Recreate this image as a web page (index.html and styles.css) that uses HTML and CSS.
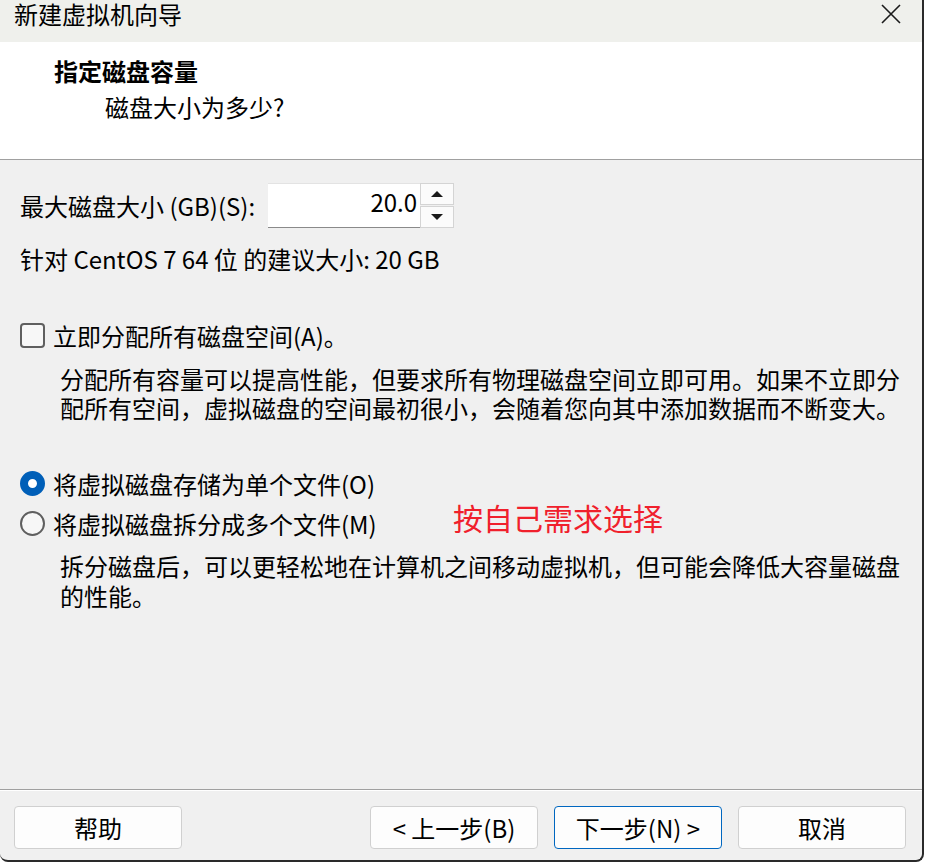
FILE: index.html
```html
<!DOCTYPE html>
<html lang="zh-CN">
<head>
  <meta charset="UTF-8">
  <link rel="stylesheet" href="styles.css">
  <title>新建虚拟机向导</title>
</head>
<body>
  <div class="window">
    <div class="titlebar">
      <span class="title">新建虚拟机向导</span>
      <svg class="close" width="22" height="22" viewBox="0 0 22 22">
        <path d="M2 2 L20 20 M20 2 L2 20" stroke="#1a1a1a" stroke-width="1.6" fill="none"/>
      </svg>
    </div>

    <div class="header">
      <div class="header-title">指定磁盘容量</div>
      <div class="header-sub">磁盘大小为多少?</div>
    </div>

    <div class="content">
      <div class="size-row">
        <label class="size-label">最大磁盘大小 (GB)(S):</label>
        <div class="spin">
          <div class="spin-value">20.0</div>
          <div class="spin-buttons">
            <div class="spin-btn"><span class="arrow-up"></span></div>
            <div class="spin-btn"><span class="arrow-down"></span></div>
          </div>
        </div>
      </div>
      <div class="hint">针对 CentOS 7 64 位 的建议大小: 20 GB</div>

      <div class="option check-row">
        <span class="checkbox"></span>
        <span>立即分配所有磁盘空间(A)。</span>
      </div>
      <p class="desc">分配所有容量可以提高性能，但要求所有物理磁盘空间立即可用。如果不立即分配所有空间，虚拟磁盘的空间最初很小，会随着您向其中添加数据而不断变大。</p>

      <div class="option radio-first">
        <span class="radio radio-on"></span>
        <span>将虚拟磁盘存储为单个文件(O)</span>
      </div>
      <div class="option radio-second">
        <span class="radio"></span>
        <span>将虚拟磁盘拆分成多个文件(M)</span>
      </div>
      <p class="desc desc-split">拆分磁盘后，可以更轻松地在计算机之间移动虚拟机，但可能会降低大容量磁盘的性能。</p>

      <div class="note">按自己需求选择</div>
    </div>

    <div class="footer">
      <button class="btn">帮助</button>
      <div class="nav-buttons">
        <button class="btn">&lt; 上一步(B)</button>
        <button class="btn btn-primary">下一步(N) &gt;</button>
        <button class="btn">取消</button>
      </div>
    </div>
  </div>
</body>
</html>
```

FILE: styles.css
```css
body {
  margin: 0;
  padding: 0;
  background-color: #ffffff;
  font-family: "Noto Sans CJK SC", "Noto Sans", sans-serif;
  color: #000;
}

.window {
  width: 924px;
  height: 862px;
  box-sizing: border-box;
  background-color: #f0f0f0;
  border-right: 2px solid #2a2a2a;
  border-bottom: 2px solid #2a2a2a;
  border-bottom-right-radius: 8px;
  border-bottom-left-radius: 8px;
  display: flex;
  flex-direction: column;
  overflow: hidden;
}

.titlebar {
  height: 42px;
  flex-shrink: 0;
  box-sizing: border-box;
  background-color: #eff0ec;
  display: flex;
  justify-content: space-between;
  align-items: flex-start;
  padding: 1px 20px 0 14px;
}

.title {
  font-size: 24px;
  line-height: 26px;
}

.close {
  margin-top: 2px;
}

.header {
  height: 118px;
  flex-shrink: 0;
  box-sizing: border-box;
  background-color: #fff;
  border-bottom: 1px solid #a0a0a0;
  padding: 14px 0 0 54px;
}

.header-title {
  font-size: 24px;
  line-height: 30px;
  font-weight: bold;
}

.header-sub {
  font-size: 24px;
  line-height: 30px;
  margin: 6px 0 0 51px;
}

.content {
  flex: 1;
  position: relative;
  padding: 0 20px;
  font-size: 24px;
}

.size-row {
  display: flex;
  align-items: center;
  margin-top: 23px;
}

.size-label {
  line-height: 30px;
  margin-right: 13px;
}

.spin {
  display: flex;
  height: 45px;
}

.spin-value {
  width: 152px;
  box-sizing: border-box;
  background-color: #fff;
  border-top: 1px solid #e3e3e3;
  border-bottom: 1px solid #8a8a8a;
  text-align: right;
  padding-right: 3px;
  line-height: 36px;
}

.spin-buttons {
  display: flex;
  flex-direction: column;
  width: 34px;
  gap: 1px;
}

.spin-btn {
  flex: 1;
  background-color: #fbfbfb;
  border: 1px solid #d4d4d4;
  display: flex;
  align-items: center;
  justify-content: center;
}

.arrow-up {
  border-left: 6px solid transparent;
  border-right: 6px solid transparent;
  border-bottom: 6px solid #1a1a1a;
}

.arrow-down {
  border-left: 6px solid transparent;
  border-right: 6px solid transparent;
  border-top: 6px solid #1a1a1a;
}

.hint {
  line-height: 30px;
  margin-top: 16px;
}

.option {
  display: flex;
  align-items: center;
  gap: 8px;
  height: 30px;
}

.check-row {
  margin-top: 46px;
}

.checkbox {
  width: 25px;
  height: 25px;
  box-sizing: border-box;
  border: 2px solid #5f5f5f;
  border-radius: 4px;
  background-color: #f7f7f7;
}

.desc {
  margin: 14px 0 0 40px;
  line-height: 29px;
}

.radio-first {
  margin-top: 46px;
}

.radio-second {
  margin-top: 10px;
}

.radio {
  width: 25px;
  height: 25px;
  box-sizing: border-box;
  border: 2px solid #5f5f5f;
  border-radius: 50%;
  background-color: #f7f7f7;
}

.radio-on {
  border: 8px solid #005fb8;
  background-color: #fff;
}

.desc-split {
  margin-top: 13px;
  line-height: 30px;
}

.note {
  position: absolute;
  left: 453px;
  top: 337px;
  font-size: 30px;
  line-height: 40px;
  color: #f0202c;
}

.footer {
  border-top: 1px solid #a0a0a0;
  box-shadow: inset 0 1px 0 #ffffff;
  padding: 16px 16px 0 14px;
  height: 54px;
  display: flex;
  justify-content: space-between;
}

.nav-buttons {
  display: flex;
  gap: 16px;
}

.btn {
  width: 168px;
  height: 43px;
  background-color: #fdfdfd;
  border: 1px solid #d0d0d0;
  border-radius: 4px;
  font-family: "Noto Sans CJK SC", "Noto Sans", sans-serif;
  font-size: 24px;
  color: #000;
  padding: 0;
}

.btn-primary {
  border-color: #0067c0;
}
```
